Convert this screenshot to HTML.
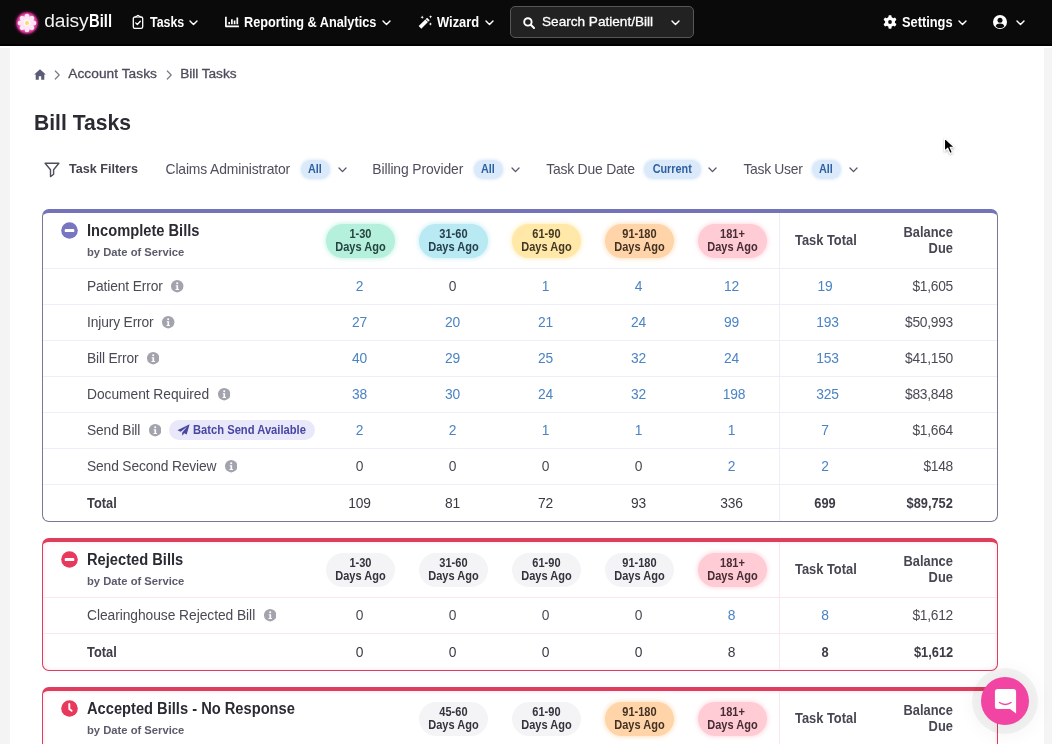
<!DOCTYPE html>
<html lang="en">
<head>
<meta charset="utf-8">
<title>Bill Tasks - daisyBill</title>
<style>
*{box-sizing:border-box;margin:0;padding:0}
html,body{width:1052px;height:744px;overflow:hidden;background:#fff}
body{font-family:"Liberation Sans",sans-serif;color:#33333d;position:relative}
a{text-decoration:none;color:#4b83c4}
.page{position:absolute;left:0;top:0;width:1052px;height:744px;overflow:hidden;will-change:transform}
.gut-l{position:absolute;left:0;top:48px;width:10px;height:696px;background:#f4f4f4}
.gut-r{position:absolute;left:1044px;top:48px;width:8px;height:696px;background:#f4f4f4}
.sx{display:inline-block;transform-origin:0 50%;transform:scaleX(.91);white-space:nowrap}
/* NAV */
.nav{position:absolute;left:0;top:0;width:1052px;height:46px;background:#0a0a0a;border-bottom:2px solid #000;color:#fff}
.nav .it{position:absolute;top:0;height:44px;line-height:44px;font-size:14px;font-weight:700;white-space:nowrap;transform-origin:0 50%}
.nav svg{position:absolute}
.logo-t{position:absolute;left:44.3px;top:8px;font-size:19.2px;line-height:26px;letter-spacing:-.12px;color:#f2f2f2;white-space:nowrap}
.logo-t b{font-weight:700;letter-spacing:0;display:inline-block;transform:scaleX(.77);transform-origin:0 50%;color:#fff}
.search{position:absolute;left:510px;top:6px;width:184px;height:32px;border:1px solid #575757;border-radius:5px;background:#222}
.search span{position:absolute;left:31px;top:0;line-height:30px;font-size:13.6px;color:#fff;letter-spacing:0;white-space:nowrap;-webkit-text-stroke:.3px #fff}
/* BREADCRUMB */
.bc{position:absolute;top:64px;height:20px;line-height:20px;font-size:13.7px;color:#4b4b5b;white-space:nowrap;-webkit-text-stroke:.3px #4b4b5b}
h1{position:absolute;left:34.2px;top:106.7px;font-size:22.5px;line-height:32px;font-weight:700;color:#2b2b33;white-space:nowrap;transform:scaleX(.938);transform-origin:0 50%}
/* FILTERS */
.f{position:absolute;top:159px;height:20px;line-height:20px;font-size:13.9px;color:#4f4f5d;white-space:nowrap}
.f.b{font-size:13.3px;font-weight:700;color:#44444f;transform:scaleX(.946);transform-origin:0 50%}
.tag{position:absolute;top:160px;height:19px;border-radius:10px;background:#dbeafa;box-shadow:0 0 3px 1px rgba(219,234,250,.8);color:#2d5f9f;font-size:12.3px;font-weight:700;line-height:19px;text-align:center}
.tag span{display:inline-block;transform:scaleX(.88)}
/* CARDS */
.card{position:absolute;left:42px;width:956px;background:#fff;border:1px solid;border-top-width:4px;border-radius:7px;overflow:hidden}
.card.p{border-color:#7472b8 #787896 #787896}
.card.r{border-color:#de3d5e;box-shadow:inset 0 0 5px rgba(255,200,215,.5)}
.row{position:relative;height:36px;border-top:1px solid #eeeef8;font-size:13.8px;line-height:35px;color:#4a4a55}
.card.r .row{border-top-color:#fbe8ec}
.row.h{height:55px;border-top:0}
.row.t{height:37px;color:#3a3a44;line-height:37px}
.row>*{position:absolute;top:0;white-space:nowrap}
.row .l{left:44px;letter-spacing:-.14px}
.row .c{width:80px;text-align:center;letter-spacing:-.2px}
.c1{left:276.5px}.c2{left:369.5px}.c3{left:462.5px}.c4{left:555.5px}.c5{left:648.5px}.c6{left:742px}
.row .w3{margin-left:2.5px}
.row .bal{right:44px;text-align:right;letter-spacing:-.27px}
.vline{position:absolute;left:736px;top:0;bottom:0;width:1px;background:#eeeef8}
.card.r .vline{background:#fbe8ec}
.row.t .l,.row.t .c6,.row.t .bal{font-weight:700;color:#3d3d48;letter-spacing:0;transform:scaleX(.93)}
.row.t .l{transform-origin:0 50%}
.row.t .bal{transform-origin:100% 50%}
.ico{left:18px;top:9px!important;width:17px;height:17px}
.ttl{left:44px;top:7.6px!important;font-size:16px;line-height:20px;font-weight:700;color:#2b2b33;transform:scaleX(.917);transform-origin:0 50%}
.sub{left:44px;top:30.6px!important;font-size:11.8px;line-height:16px;font-weight:700;color:#5b5b6b;transform:scaleX(.951);transform-origin:0 50%}
.pill{position:absolute;top:10.6px!important;width:69px;height:34px;border-radius:17px;font-size:12px;line-height:12.5px;font-weight:700;color:#33333d;text-align:center;padding-top:4.5px;white-space:nowrap}
.pill span{display:inline-block;transform:scaleX(.918)}
.p1{left:283px}.p2{left:376px}.p3{left:469px}.p4{left:562px}.p5{left:655px}
.g{color:#25443f;background:#b4f0dc;box-shadow:0 0 4px 1px rgba(180,240,220,.7)}
.bl{color:#25404c;background:#b9e9f3;box-shadow:0 0 4px 1px rgba(185,233,243,.7)}
.y{color:#423824;background:#ffe8a8;box-shadow:0 0 4px 1px rgba(255,232,168,.7)}
.o{color:#433224;background:#ffd4a8;box-shadow:0 0 4px 1px rgba(255,212,168,.7)}
.pk{color:#462c34;background:#ffccd5;box-shadow:0 0 4px 1px rgba(255,204,213,.7)}
.gr{background:#f4f4f6}
.hd{font-size:13.8px;font-weight:700;color:#474752;line-height:16px;transform:scaleX(.933)}
.hd.tt{left:752px;top:19.6px!important;transform-origin:0 50%}
.hd.bd{right:44px;top:11.6px!important;text-align:right;transform-origin:100% 50%}
.info{display:inline-block;width:12.4px;height:12.4px;vertical-align:-1.6px;margin-left:8.6px}
.badge{display:inline-block;position:relative;vertical-align:-5.4px;margin-left:7.5px;width:146px;height:20px;border-radius:10px;background:#e9e8fb;color:#4846a0;font-size:12px;font-weight:700;line-height:20px}
.badge svg{position:absolute;left:8.5px;top:4px}
.badge span{position:absolute;left:24.5px;top:0;transform:scaleX(.932);transform-origin:0 50%;letter-spacing:0}
.chat{position:absolute;left:981px;top:677px;width:48px;height:48px;border-radius:24px;background:#f245a3;box-shadow:0 0 0 9px rgba(0,0,0,.047),0 2px 18px 10px rgba(0,0,0,.035)}
</style>
</head>
<body>
<div class="page">
<div class="gut-l"></div><div class="gut-r"></div>
<div class="nav">
  <svg style="left:16px;top:11.5px;filter:drop-shadow(0 0 1.5px rgba(190,30,130,.8))" width="22" height="22" viewBox="0 0 22 22"><defs><radialGradient id="lg" cx="50%" cy="50%" r="50%"><stop offset="0" stop-color="#ffd0ea"/><stop offset=".55" stop-color="#f57cc0"/><stop offset=".85" stop-color="#d63a98"/><stop offset="1" stop-color="#8a1f60"/></radialGradient></defs><circle cx="11" cy="11" r="11" fill="url(#lg)"/><g fill="#ffe6f4"><ellipse cx="11" cy="5.9" rx="2.7" ry="4.2" transform="rotate(0 11 11)"/><ellipse cx="11" cy="5.9" rx="2.7" ry="4.2" transform="rotate(45 11 11)"/><ellipse cx="11" cy="5.9" rx="2.7" ry="4.2" transform="rotate(90 11 11)"/><ellipse cx="11" cy="5.9" rx="2.7" ry="4.2" transform="rotate(135 11 11)"/><ellipse cx="11" cy="5.9" rx="2.7" ry="4.2" transform="rotate(180 11 11)"/><ellipse cx="11" cy="5.9" rx="2.7" ry="4.2" transform="rotate(225 11 11)"/><ellipse cx="11" cy="5.9" rx="2.7" ry="4.2" transform="rotate(270 11 11)"/><ellipse cx="11" cy="5.9" rx="2.7" ry="4.2" transform="rotate(315 11 11)"/></g><circle cx="11" cy="11" r="3.4" fill="#fff6fb"/><circle cx="11" cy="11" r="2" fill="#f9dc6a"/></svg>
  <div class="logo-t">daisy<b>Bill</b></div>
  <svg style="left:132px;top:14px" width="12" height="16" viewBox="0 0 12 16"><rect x="1.3" y="3" width="9.4" height="11.4" rx="1.6" fill="none" stroke="#fff" stroke-width="1.3"/><path d="M3.8 3.2V2.4h1.2a1 1 0 0 1 2 0h1.2v.8" fill="#0b0b0b" stroke="#fff" stroke-width="1.1" stroke-linejoin="round"/><path d="M3.7 8.9l1.6 1.6 3-3.2" fill="none" stroke="#fff" stroke-width="1.3" stroke-linecap="round" stroke-linejoin="round"/></svg>
  <div class="it" style="left:150.3px;transform:scaleX(.885)">Tasks</div>
  <svg style="position:absolute;left:189px;top:19.5px" width="9" height="6" viewBox="0 0 9 6"><path d="M1 1l3.5 3.6L8 1" fill="none" stroke="#fff" stroke-width="1.4" stroke-linecap="round" stroke-linejoin="round"/></svg>
  <svg style="left:225px;top:16px" width="14" height="12" viewBox="0 0 14 12"><path d="M.9.8v9.5h13" fill="none" stroke="#fff" stroke-width="1.7" stroke-linejoin="round"/><path d="M4.2 8.2V6M6.9 8.2V3.2M9.6 8.2V4.6M12.3 8.2V1.6" stroke="#fff" stroke-width="1.7"/></svg>
  <div class="it" style="left:244.25px;transform:scaleX(.908)">Reporting &amp; Analytics</div>
  <svg style="position:absolute;left:382px;top:19.5px" width="9" height="6" viewBox="0 0 9 6"><path d="M1 1l3.5 3.6L8 1" fill="none" stroke="#fff" stroke-width="1.4" stroke-linecap="round" stroke-linejoin="round"/></svg>
  <svg style="left:418px;top:15px" width="15" height="14" viewBox="0 0 15 14"><path d="M.7 11.1l8.4-8.4 2.6 2.6-8.4 8.4z" fill="#fff"/><path d="M7.6 4.3l2.5 2.5" stroke="#0b0b0b" stroke-width=".9"/><path d="M4.2.5l.5 1.2 1.2.5-1.2.5-.5 1.2-.5-1.2-1.2-.5 1.2-.5zM12.6.2l.5 1.1 1.1.5-1.1.5-.5 1.1-.5-1.1-1.1-.5 1.1-.5zM12.4 7.3l.5 1.2 1.2.5-1.2.5-.5 1.2-.5-1.2-1.2-.5 1.2-.5z" fill="#fff"/></svg>
  <div class="it" style="left:436.9px;transform:scaleX(.922)">Wizard</div>
  <svg style="position:absolute;left:484.5px;top:19.5px" width="9" height="6" viewBox="0 0 9 6"><path d="M1 1l3.5 3.6L8 1" fill="none" stroke="#fff" stroke-width="1.4" stroke-linecap="round" stroke-linejoin="round"/></svg>
  <div class="search"><span>Search Patient/Bill</span></div>
  <svg style="left:523px;top:16.5px" width="12" height="12" viewBox="0 0 12 12"><circle cx="4.9" cy="4.9" r="3.7" fill="none" stroke="#fff" stroke-width="1.9"/><path d="M7.8 7.8l3.2 3.2" stroke="#fff" stroke-width="2" stroke-linecap="round"/></svg>
  <svg style="position:absolute;left:670.5px;top:19.5px" width="9" height="6" viewBox="0 0 9 6"><path d="M1 1l3.5 3.6L8 1" fill="none" stroke="#fff" stroke-width="1.4" stroke-linecap="round" stroke-linejoin="round"/></svg>
  <svg style="left:883px;top:15px" width="14" height="14" viewBox="0 0 14 14"><g transform="translate(7 7)" fill="#fff"><circle r="5"/><rect x="-1.55" y="-6.7" width="3.1" height="13.4" rx=".8"/><rect transform="rotate(60)" x="-1.55" y="-6.7" width="3.1" height="13.4" rx=".8"/><rect transform="rotate(120)" x="-1.55" y="-6.7" width="3.1" height="13.4" rx=".8"/><circle r="1.9" fill="#0b0b0b"/></g></svg>
  <div class="it" style="left:902px;transform:scaleX(.916)">Settings</div>
  <svg style="position:absolute;left:957.5px;top:19.5px" width="9" height="6" viewBox="0 0 9 6"><path d="M1 1l3.5 3.6L8 1" fill="none" stroke="#fff" stroke-width="1.4" stroke-linecap="round" stroke-linejoin="round"/></svg>
  <svg style="left:993px;top:15px" width="14" height="14" viewBox="0 0 14 14"><circle cx="7" cy="7" r="7" fill="#fff"/><circle cx="7" cy="5.3" r="2.5" fill="#0b0b0b"/><path d="M2.6 11.2c.6-2 2.3-2.7 4.4-2.7s3.8.7 4.4 2.7c-1.1 1.2-2.7 1.9-4.4 1.9s-3.3-.7-4.4-1.9z" fill="#0b0b0b"/></svg>
  <svg style="position:absolute;left:1016px;top:19.5px" width="9" height="6" viewBox="0 0 9 6"><path d="M1 1l3.5 3.6L8 1" fill="none" stroke="#fff" stroke-width="1.4" stroke-linecap="round" stroke-linejoin="round"/></svg>
</div>

<svg style="position:absolute;left:34px;top:68.5px" width="12" height="11" viewBox="0 0 12 11"><path d="M6 .3L.2 5.4h1.5V10.7h3.1V7.3h2.4v3.4h3.1V5.4h1.5z" fill="#5b5b78"/></svg>
<svg style="position:absolute;left:53.5px;top:69.5px" width="7" height="10" viewBox="0 0 7 10"><path d="M1.3 1l3.9 4-3.9 4" fill="none" stroke="#7b7b86" stroke-width="1.2" stroke-linecap="round" stroke-linejoin="round"/></svg>
<div class="bc" style="left:68.3px;letter-spacing:.05px">Account Tasks</div>
<svg style="position:absolute;left:165.5px;top:69.5px" width="7" height="10" viewBox="0 0 7 10"><path d="M1.3 1l3.9 4-3.9 4" fill="none" stroke="#7b7b86" stroke-width="1.2" stroke-linecap="round" stroke-linejoin="round"/></svg>
<div class="bc" style="left:180.2px;letter-spacing:-.05px">Bill Tasks</div>
<h1>Bill Tasks</h1>

<svg style="position:absolute;left:44px;top:161.5px" width="16" height="16" viewBox="0 0 16 16"><path d="M1.1 1.3h13.8l-5.3 6.4v4.6l-3.1 2.3V7.7z" fill="none" stroke="#4f4f5d" stroke-width="1.4" stroke-linejoin="round"/></svg>
<div class="f b" style="left:69.4px">Task Filters</div>
<div class="f" style="left:165.5px;letter-spacing:-.14px">Claims Administrator</div>
<div class="tag" style="left:300.5px;width:29px"><span>All</span></div>
<svg style="position:absolute;left:338px;top:166.5px" width="9" height="6" viewBox="0 0 9 6"><path d="M1 1l3.5 3.6L8 1" fill="none" stroke="#55556a" stroke-width="1.3" stroke-linecap="round" stroke-linejoin="round"/></svg>
<div class="f" style="left:372.3px;letter-spacing:-.11px">Billing Provider</div>
<div class="tag" style="left:473.5px;width:29px"><span>All</span></div>
<svg style="position:absolute;left:511px;top:166.5px" width="9" height="6" viewBox="0 0 9 6"><path d="M1 1l3.5 3.6L8 1" fill="none" stroke="#55556a" stroke-width="1.3" stroke-linecap="round" stroke-linejoin="round"/></svg>
<div class="f" style="left:546.2px;letter-spacing:-.2px">Task Due Date</div>
<div class="tag" style="left:643.5px;width:57px"><span>Current</span></div>
<svg style="position:absolute;left:708.2px;top:166.5px" width="9" height="6" viewBox="0 0 9 6"><path d="M1 1l3.5 3.6L8 1" fill="none" stroke="#55556a" stroke-width="1.3" stroke-linecap="round" stroke-linejoin="round"/></svg>
<div class="f" style="left:743.4px;letter-spacing:-.29px">Task User</div>
<div class="tag" style="left:811.5px;width:29px"><span>All</span></div>
<svg style="position:absolute;left:849.2px;top:166.5px" width="9" height="6" viewBox="0 0 9 6"><path d="M1 1l3.5 3.6L8 1" fill="none" stroke="#55556a" stroke-width="1.3" stroke-linecap="round" stroke-linejoin="round"/></svg>

<div class="card p" style="top:209px;height:313px">
  <div class="vline"></div>
  <div class="row h">
    <svg class="ico" viewBox="0 0 17 17"><circle cx="8.5" cy="8.5" r="8.3" fill="#7876c0"/><rect x="3.7" y="6.9" width="9.6" height="3.2" rx="1.2" fill="#fff"/></svg>
    <div class="ttl">Incomplete Bills</div><div class="sub">by Date of Service</div>
    <div class="pill p1 g"><span>1-30<br>Days Ago</span></div><div class="pill p2 bl"><span>31-60<br>Days Ago</span></div><div class="pill p3 y"><span>61-90<br>Days Ago</span></div><div class="pill p4 o"><span>91-180<br>Days Ago</span></div><div class="pill p5 pk"><span>181+<br>Days Ago</span></div>
    <div class="hd tt">Task Total</div>
    <div class="hd bd">Balance<br>Due</div>
  </div>
  <div class="row"><div class="l">Patient Error<svg class="info" viewBox="0 0 12 12"><circle cx="6" cy="6" r="6" fill="#a3a3ad"/><path d="M4.6 5h2.3v3.7h.8v1H4.4v-1h.9V6h-.7z" fill="#fff"/><circle cx="6" cy="3.2" r="1" fill="#fff"/></svg></div><a class="c c1">2</a><span class="c c2">0</span><a class="c c3">1</a><a class="c c4">4</a><a class="c c5">12</a><a class="c c6">19</a><span class="bal">$1,605</span></div>
  <div class="row"><div class="l">Injury Error<svg class="info" viewBox="0 0 12 12"><circle cx="6" cy="6" r="6" fill="#a3a3ad"/><path d="M4.6 5h2.3v3.7h.8v1H4.4v-1h.9V6h-.7z" fill="#fff"/><circle cx="6" cy="3.2" r="1" fill="#fff"/></svg></div><a class="c c1">27</a><a class="c c2">20</a><a class="c c3">21</a><a class="c c4">24</a><a class="c c5">99</a><a class="c c6 w3">193</a><span class="bal">$50,993</span></div>
  <div class="row"><div class="l">Bill Error<svg class="info" viewBox="0 0 12 12"><circle cx="6" cy="6" r="6" fill="#a3a3ad"/><path d="M4.6 5h2.3v3.7h.8v1H4.4v-1h.9V6h-.7z" fill="#fff"/><circle cx="6" cy="3.2" r="1" fill="#fff"/></svg></div><a class="c c1">40</a><a class="c c2">29</a><a class="c c3">25</a><a class="c c4">32</a><a class="c c5">24</a><a class="c c6 w3">153</a><span class="bal">$41,150</span></div>
  <div class="row"><div class="l"><span style="letter-spacing:-.04px">Document Required</span><svg class="info" viewBox="0 0 12 12"><circle cx="6" cy="6" r="6" fill="#a3a3ad"/><path d="M4.6 5h2.3v3.7h.8v1H4.4v-1h.9V6h-.7z" fill="#fff"/><circle cx="6" cy="3.2" r="1" fill="#fff"/></svg></div><a class="c c1">38</a><a class="c c2">30</a><a class="c c3">24</a><a class="c c4">32</a><a class="c c5 w3">198</a><a class="c c6 w3">325</a><span class="bal">$83,848</span></div>
  <div class="row"><div class="l">Send Bill<svg class="info" viewBox="0 0 12 12"><circle cx="6" cy="6" r="6" fill="#a3a3ad"/><path d="M4.6 5h2.3v3.7h.8v1H4.4v-1h.9V6h-.7z" fill="#fff"/><circle cx="6" cy="3.2" r="1" fill="#fff"/></svg><span class="badge"><svg width="13" height="12" viewBox="0 0 13 12"><path d="M12.6.2L.4 6.2l3.3 1.5 6.5-5.2-5 5.9v3.3l2.1-2.4 2.4 1.1z" fill="#4846a0"/></svg><span>Batch Send Available</span></span></div><a class="c c1">2</a><a class="c c2">2</a><a class="c c3">1</a><a class="c c4">1</a><a class="c c5">1</a><a class="c c6">7</a><span class="bal">$1,664</span></div>
  <div class="row"><div class="l">Send Second Review<svg class="info" viewBox="0 0 12 12"><circle cx="6" cy="6" r="6" fill="#a3a3ad"/><path d="M4.6 5h2.3v3.7h.8v1H4.4v-1h.9V6h-.7z" fill="#fff"/><circle cx="6" cy="3.2" r="1" fill="#fff"/></svg></div><span class="c c1">0</span><span class="c c2">0</span><span class="c c3">0</span><span class="c c4">0</span><a class="c c5">2</a><a class="c c6">2</a><span class="bal">$148</span></div>
  <div class="row t"><div class="l">Total</div><span class="c c1">109</span><span class="c c2">81</span><span class="c c3">72</span><span class="c c4">93</span><span class="c c5">336</span><span class="c c6">699</span><span class="bal">$89,752</span></div>
</div>

<div class="card r" style="top:538px;height:133px">
  <div class="vline"></div>
  <div class="row h">
    <svg class="ico" viewBox="0 0 17 17"><circle cx="8.5" cy="8.5" r="8.3" fill="#e8385b"/><rect x="3.7" y="6.9" width="9.6" height="3.2" rx="1.2" fill="#fff"/></svg>
    <div class="ttl">Rejected Bills</div><div class="sub">by Date of Service</div>
    <div class="pill p1 gr"><span>1-30<br>Days Ago</span></div><div class="pill p2 gr"><span>31-60<br>Days Ago</span></div><div class="pill p3 gr"><span>61-90<br>Days Ago</span></div><div class="pill p4 gr"><span>91-180<br>Days Ago</span></div><div class="pill p5 pk"><span>181+<br>Days Ago</span></div>
    <div class="hd tt">Task Total</div>
    <div class="hd bd">Balance<br>Due</div>
  </div>
  <div class="row"><div class="l"><span style="letter-spacing:-.05px">Clearinghouse Rejected Bill</span><svg class="info" viewBox="0 0 12 12"><circle cx="6" cy="6" r="6" fill="#a3a3ad"/><path d="M4.6 5h2.3v3.7h.8v1H4.4v-1h.9V6h-.7z" fill="#fff"/><circle cx="6" cy="3.2" r="1" fill="#fff"/></svg></div><span class="c c1">0</span><span class="c c2">0</span><span class="c c3">0</span><span class="c c4">0</span><a class="c c5">8</a><a class="c c6">8</a><span class="bal">$1,612</span></div>
  <div class="row t"><div class="l">Total</div><span class="c c1">0</span><span class="c c2">0</span><span class="c c3">0</span><span class="c c4">0</span><span class="c c5">8</span><span class="c c6">8</span><span class="bal">$1,612</span></div>
</div>

<div class="card r" style="top:687px;height:120px">
  <div class="vline"></div>
  <div class="row h">
    <svg class="ico" viewBox="0 0 17 17"><circle cx="8.5" cy="8.5" r="8.3" fill="#e8385b"/><path d="M8.3 4v5l2.3 1.8" fill="none" stroke="#fff" stroke-width="1.9" stroke-linecap="round" stroke-linejoin="round"/></svg>
    <div class="ttl">Accepted Bills - No Response</div><div class="sub">by Date of Service</div>
    <div class="pill p2 gr"><span>45-60<br>Days Ago</span></div><div class="pill p3 gr"><span>61-90<br>Days Ago</span></div><div class="pill p4 o"><span>91-180<br>Days Ago</span></div><div class="pill p5 pk"><span>181+<br>Days Ago</span></div>
    <div class="hd tt">Task Total</div>
    <div class="hd bd">Balance<br>Due</div>
  </div>
</div>

<div class="chat"><svg style="position:absolute;left:12.5px;top:10.7px" width="23" height="27" viewBox="0 0 25 27" preserveAspectRatio="none"><path d="M3.5 1h18a2.5 2.5 0 0 1 2.5 2.5V25.5L17.5 21H3.5A2.5 2.5 0 0 1 1 18.5v-15A2.5 2.5 0 0 1 3.5 1z" fill="#fff"/><path d="M6 14.5c3.5 2.6 9 2.6 12.5 0" fill="none" stroke="#f245a3" stroke-width="1.5" stroke-linecap="round"/></svg></div>
<svg style="position:absolute;left:942px;top:136px;filter:drop-shadow(0 1px 1px rgba(0,0,0,.25))" width="14" height="20" viewBox="0 0 14 20"><path d="M2.5 2v13.2l3.2-3 2.3 5.3 2.4-1-2.3-5.2h4.4z" fill="#000" stroke="#fff" stroke-width="1.1" stroke-linejoin="round"/></svg>

</div>
</body>
</html>
